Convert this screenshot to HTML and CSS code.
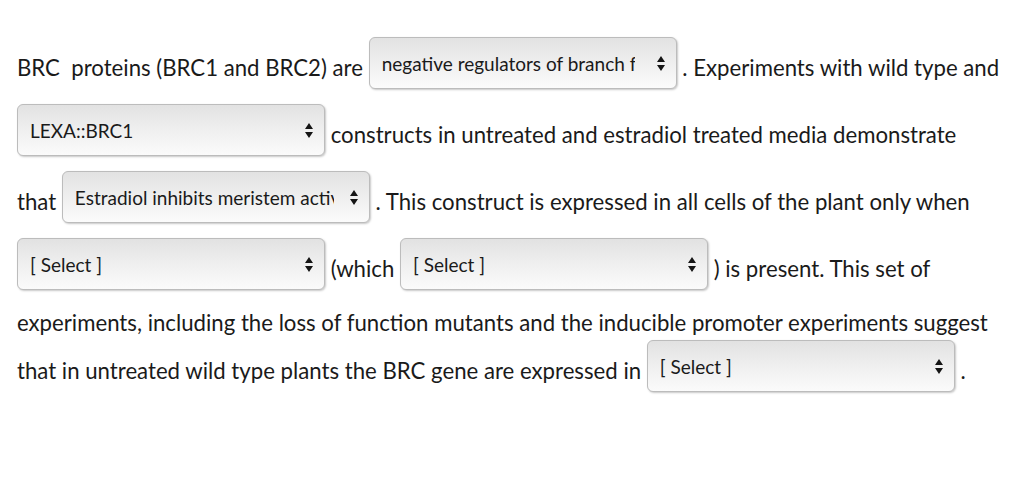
FILE: index.html
```html
<!DOCTYPE html>
<html lang="en">
<head>
<meta charset="utf-8">
<title>Question</title>
<link rel="stylesheet" href="styles.css">
</head>
<body>
<div class="question">
<p class="question-text">BRC&nbsp; proteins (BRC1 and BRC2) are <select class="dd dd-clip"><option>negative regulators of branch formation</option></select> . Experiments with wild type and<br><select class="dd"><option>LEXA::BRC1</option></select> constructs in untreated and estradiol treated media demonstrate<br>that <select class="dd"><option>Estradiol inhibits meristem activity</option></select> . This construct is expressed in all cells of the plant only when<br><select class="dd"><option>[ Select ]</option></select> (which <select class="dd"><option>[ Select ]</option></select> ) is present. This set of<br>experiments, including the loss of function mutants and the inducible promoter experiments suggest<br>that in untreated wild type plants the BRC gene are expressed in <select class="dd"><option>[ Select ]</option></select> .</p>
</div>
</body>
</html>
```

FILE: styles.css
```css
html, body {
  margin: 0;
  padding: 0;
  background: #ffffff;
}

.question {
  padding: 37px 0 0 17px;
  font-family: Lato, "Open Sans", sans-serif;
  color: #1a1a1a;
}

.question-text {
  margin: 0;
  font-size: 22.2px;
  line-height: 35px;
  white-space: nowrap;
}

.dd {
  -webkit-appearance: none;
  appearance: none;
  box-sizing: border-box;
  width: 308px;
  height: 52px;
  margin: 0 0 15px 0;
  padding: 0 35px 0 12px;
  vertical-align: middle;
  font-family: Lato, "Open Sans", sans-serif;
  font-size: 19px;
  color: #1a1a1a;
  border: 1px solid #bcbcbc;
  border-radius: 6px;
  background-color: #f0f0f0;
  background-image:
    url("data:image/svg+xml,%3Csvg xmlns='http://www.w3.org/2000/svg' width='8' height='15' viewBox='0 0 8 15'%3E%3Cpath d='M4 0L8 6H0z M0 9H8L4 15z' fill='%23151515'/%3E%3C/svg%3E"),
    linear-gradient(to bottom, #e2e2e2 0%, #efefef 50%, #fbfbfb 100%);
  background-repeat: no-repeat, no-repeat;
  background-position: right 11px center, 0 0;
  background-size: 8px 15px, 100% 100%;
  box-shadow: 1px 1px 2px rgba(0, 0, 0, 0.22);
}

.dd-clip {
  padding-right: 41px;
}
```
